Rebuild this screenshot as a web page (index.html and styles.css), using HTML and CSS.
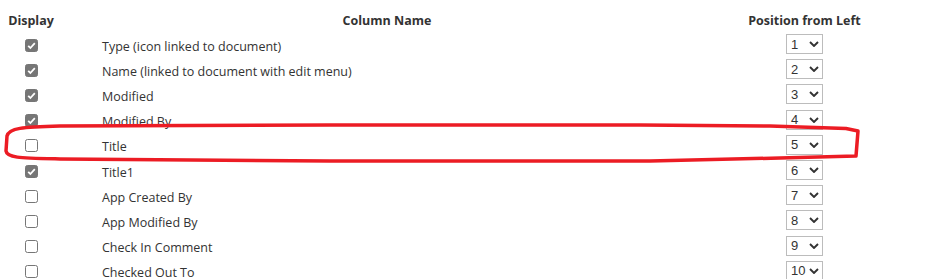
FILE: index.html
```html
<!DOCTYPE html>
<html>
<head>
<meta charset="utf-8">
<link rel="stylesheet" href="styles.css">
</head>
<body>
<div class="page">
  <div class="grid">
    <div class="hd hd-display">Display</div>
    <div class="hd hd-name">Column Name</div>
    <div class="hd hd-pos">Position from Left</div>

    <div class="cell c1"><span class="cb on"><svg viewBox="0 0 13 13"><path d="M3.2 6.8 L5.4 9 L9.8 4.2"/></svg></span></div>
    <div class="cell c2">Type (icon linked to document)</div>
    <div class="cell c3"><span class="sel"><span>1</span><svg viewBox="0 0 10 6"><path d="M1 1 L5 5 L9 1"/></svg></span></div>

    <div class="cell c1"><span class="cb on"><svg viewBox="0 0 13 13"><path d="M3.2 6.8 L5.4 9 L9.8 4.2"/></svg></span></div>
    <div class="cell c2">Name (linked to document with edit menu)</div>
    <div class="cell c3"><span class="sel"><span>2</span><svg viewBox="0 0 10 6"><path d="M1 1 L5 5 L9 1"/></svg></span></div>

    <div class="cell c1"><span class="cb on"><svg viewBox="0 0 13 13"><path d="M3.2 6.8 L5.4 9 L9.8 4.2"/></svg></span></div>
    <div class="cell c2">Modified</div>
    <div class="cell c3"><span class="sel"><span>3</span><svg viewBox="0 0 10 6"><path d="M1 1 L5 5 L9 1"/></svg></span></div>

    <div class="cell c1"><span class="cb on"><svg viewBox="0 0 13 13"><path d="M3.2 6.8 L5.4 9 L9.8 4.2"/></svg></span></div>
    <div class="cell c2">Modified By</div>
    <div class="cell c3"><span class="sel"><span>4</span><svg viewBox="0 0 10 6"><path d="M1 1 L5 5 L9 1"/></svg></span></div>

    <div class="cell c1"><span class="cb"></span></div>
    <div class="cell c2">Title</div>
    <div class="cell c3"><span class="sel"><span>5</span><svg viewBox="0 0 10 6"><path d="M1 1 L5 5 L9 1"/></svg></span></div>

    <div class="cell c1"><span class="cb on"><svg viewBox="0 0 13 13"><path d="M3.2 6.8 L5.4 9 L9.8 4.2"/></svg></span></div>
    <div class="cell c2">Title1</div>
    <div class="cell c3"><span class="sel"><span>6</span><svg viewBox="0 0 10 6"><path d="M1 1 L5 5 L9 1"/></svg></span></div>

    <div class="cell c1"><span class="cb"></span></div>
    <div class="cell c2">App Created By</div>
    <div class="cell c3"><span class="sel"><span>7</span><svg viewBox="0 0 10 6"><path d="M1 1 L5 5 L9 1"/></svg></span></div>

    <div class="cell c1"><span class="cb"></span></div>
    <div class="cell c2">App Modified By</div>
    <div class="cell c3"><span class="sel"><span>8</span><svg viewBox="0 0 10 6"><path d="M1 1 L5 5 L9 1"/></svg></span></div>

    <div class="cell c1"><span class="cb"></span></div>
    <div class="cell c2">Check In Comment</div>
    <div class="cell c3"><span class="sel"><span>9</span><svg viewBox="0 0 10 6"><path d="M1 1 L5 5 L9 1"/></svg></span></div>

    <div class="cell c1"><span class="cb"></span></div>
    <div class="cell c2">Checked Out To</div>
    <div class="cell c3"><span class="sel"><span>10</span><svg viewBox="0 0 10 6"><path d="M1 1 L5 5 L9 1"/></svg></span></div>
  </div>
  <svg class="mark" viewBox="0 0 937 279" width="937" height="279">
    <path d="M60 126 C22 127 9 128 7 136 L6 151 C7 158 20 158 60 159 L330 161 L650 161 L780 158 L856 156 L858 131 L846 128.5 L770 126 L640 125 L330 125 Z"/>
  </svg>
</div>
</body>
</html>
```
FILE: styles.css
```css
html, body {
  margin: 0;
  padding: 0;
  background: #fff;
}
body {
  font-family: "Open Sans", "Noto Sans", sans-serif;
  font-size: 12.5px;
  color: #333;
}
.page {
  position: relative;
  width: 937px;
  height: 279px;
  overflow: hidden;
}
.grid {
  display: grid;
  grid-template-columns: 46px 618px 265px;
  grid-template-rows: 24px;
  grid-auto-rows: 25.2px;
  padding: 8px 0 0 8px;
}
.hd {
  font-weight: 700;
  color: #333;
  display: flex;
  align-items: center;
}
.hd-display { justify-content: center; }
.hd-name { justify-content: center; padding-left: 48px; }
.hd-pos { justify-content: center; }
.cell {
  display: flex;
  align-items: center;
}
.c1 { justify-content: center; }
.c2 { padding: 3px 0 0 48px; }
.c3 { justify-content: center; }
.cb {
  width: 13px;
  height: 13px;
  box-sizing: border-box;
  border: 1px solid #767676;
  border-radius: 2.5px;
  background: #fff;
  display: block;
  margin-top: 1px;
}
.cb.on {
  background: #767676;
}
.cb svg {
  display: block;
  width: 13px;
  height: 13px;
  margin: -1px 0 0 -1px;
}
.cb svg path {
  fill: none;
  stroke: #fff;
  stroke-width: 1.8;
}
.sel {
  width: 37px;
  height: 20px;
  box-sizing: border-box;
  border: 1px solid #bcbcbc;
  display: flex;
  align-items: center;
  justify-content: space-between;
  padding: 0 3px 0 4px;
  font-family: "Liberation Sans", Arial, sans-serif;
  font-size: 13px;
  color: #333;
  margin-top: -1px;
}
.sel svg {
  width: 10px;
  height: 6px;
  display: block;
}
.sel svg path {
  fill: none;
  stroke: #333;
  stroke-width: 1.9;
}
.mark {
  position: absolute;
  left: 0;
  top: 0;
  pointer-events: none;
}
.mark path {
  fill: none;
  stroke: #ec1c24;
  stroke-width: 3.5;
  stroke-linejoin: round;
}
```
